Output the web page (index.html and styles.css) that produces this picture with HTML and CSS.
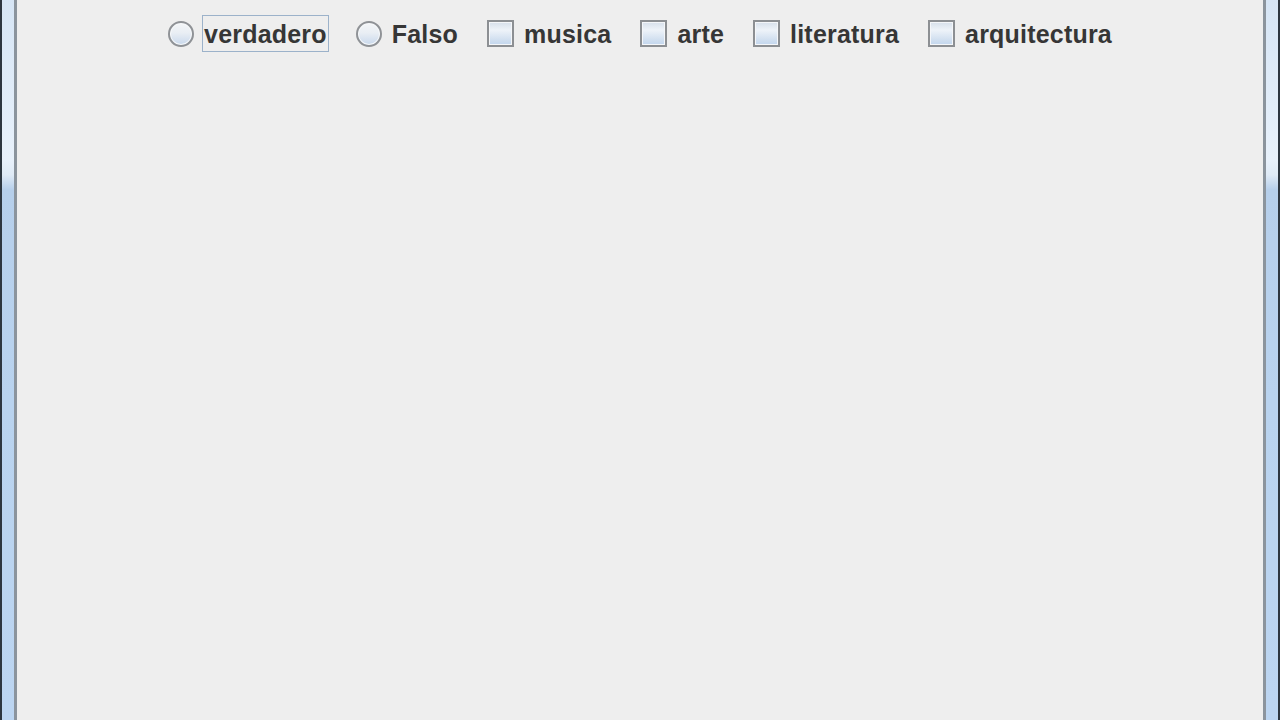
FILE: index.html
```html
<!DOCTYPE html>
<html lang="es">
<head>
<meta charset="utf-8">
<title>Opciones</title>
<link rel="stylesheet" href="styles.css">
</head>
<body>
<div class="window">
  <div class="edge edge-left"></div>
  <main class="content">
    <div class="options">
      <label class="option">
        <span class="radio"></span>
        <span class="text focused">verdadero</span>
      </label>
      <label class="option">
        <span class="radio"></span>
        <span class="text">Falso</span>
      </label>
      <label class="option">
        <span class="check"></span>
        <span class="text">musica</span>
      </label>
      <label class="option">
        <span class="check"></span>
        <span class="text">arte</span>
      </label>
      <label class="option">
        <span class="check"></span>
        <span class="text">literatura</span>
      </label>
      <label class="option">
        <span class="check"></span>
        <span class="text">arquitectura</span>
      </label>
    </div>
  </main>
  <div class="edge edge-right"></div>
</div>
</body>
</html>
```
FILE: styles.css
```css
html, body {
  margin: 0;
  padding: 0;
  width: 1280px;
  height: 720px;
  overflow: hidden;
  background: #eeeeee;
}

.window {
  display: flex;
  width: 1280px;
  height: 720px;
}

.edge {
  width: 12px;
  flex: none;
  background: linear-gradient(to bottom, #d6e5f5 0, #e8f1fb 160px, #dfeaf6 175px, #b6cfeb 190px, #b9d3ef 400px, #bcd5f1 100%);
}

.edge-left {
  border-left: 2px solid #2d3640;
}

.edge-right {
  border-right: 2px solid #2d3640;
}

.content {
  flex: 1;
  background: #eeeeee;
  border-left: 3px solid #8b949d;
  border-right: 3px solid #8b949d;
  padding-top: 15px;
}

.options {
  display: flex;
  justify-content: center;
  align-items: center;
  gap: 27px;
  padding-left: 2px;
}

.option {
  display: flex;
  align-items: center;
  gap: 8px;
  font-family: "Liberation Sans", Arial, sans-serif;
  font-weight: bold;
  font-size: 25px;
  letter-spacing: 0.2px;
  color: #363636;
}

.text {
  display: flex;
  align-items: center;
  height: 33px;
  padding: 2px 1px 0 1px;
  border: 1px solid transparent;
}

.text.focused {
  border-color: #9cb2ca;
}

.radio {
  width: 22px;
  height: 22px;
  border-radius: 50%;
  border: 2px solid #8f9296;
  background: linear-gradient(to bottom, #f4f6f8 0%, #e9eef4 45%, #c8d8ec 100%);
  box-shadow: inset 0 0 0 1px #f6f8fa;
}

.check {
  width: 23px;
  height: 23px;
  border: 2px solid #8c8f93;
  background: linear-gradient(to bottom, #d6dfea 0%, #eef3f9 35%, #d2e0f0 75%, #c2d6ee 100%);
  box-shadow: inset 0 0 0 1px #f4f6f9;
}
```
